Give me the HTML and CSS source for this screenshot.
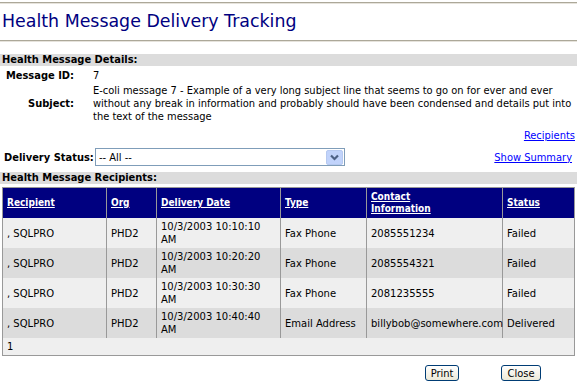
FILE: index.html
```html
<!DOCTYPE html>
<html lang="en">
<head>
    <meta charset="UTF-8">
    <title>Health Message Delivery Tracking</title>
    <link rel="stylesheet" href="styles.css">
</head>
<body>
    <div class="rule"></div>
    <h1 class="page-title">Health Message Delivery Tracking</h1>
    <div class="rule"></div>

    <div class="band">Health Message Details:</div>
    <table class="details">
        <tr>
            <td class="label">Message ID:</td>
            <td class="value">7</td>
        </tr>
        <tr>
            <td class="label">Subject:</td>
            <td class="value">E-coli message 7 - Example of a very long subject line that seems to go on for ever and ever without any break in information and probably should have been condensed and details put into the text of the message</td>
        </tr>
    </table>

    <div class="link-row"><a href="#">Recipients</a></div>

    <div class="filter-row">
        <label class="filter-label" for="status">Delivery Status:</label>
        <div class="select" id="status">
            <span class="select-text">-- All --</span>
            <span class="select-btn">
                <svg width="9" height="7" viewBox="0 0 9 7"><path d="M1 1.5 L4.5 5 L8 1.5" fill="none" stroke="#4d6185" stroke-width="2.2"/></svg>
            </span>
        </div>
        <a class="summary-link" href="#">Show Summary</a>
    </div>

    <div class="band band-recipients">Health Message Recipients:</div>
    <table class="grid">
        <colgroup>
            <col style="width:104px">
            <col style="width:50px">
            <col style="width:124px">
            <col style="width:86px">
            <col style="width:136px">
            <col>
        </colgroup>
        <thead>
            <tr>
                <th><a href="#">Recipient</a></th>
                <th><a href="#">Org</a></th>
                <th><a href="#">Delivery Date</a></th>
                <th><a href="#">Type</a></th>
                <th><a href="#">Contact<br>Information</a></th>
                <th><a href="#">Status</a></th>
            </tr>
        </thead>
        <tbody>
            <tr class="odd">
                <td>, SQLPRO</td><td>PHD2</td><td>10/3/2003 10:10:10 AM</td><td>Fax Phone</td><td>2085551234</td><td>Failed</td>
            </tr>
            <tr class="even">
                <td>, SQLPRO</td><td>PHD2</td><td>10/3/2003 10:20:20 AM</td><td>Fax Phone</td><td>2085554321</td><td>Failed</td>
            </tr>
            <tr class="odd">
                <td>, SQLPRO</td><td>PHD2</td><td>10/3/2003 10:30:30 AM</td><td>Fax Phone</td><td>2081235555</td><td>Failed</td>
            </tr>
            <tr class="even">
                <td>, SQLPRO</td><td>PHD2</td><td>10/3/2003 10:40:40 AM</td><td>Email Address</td><td>billybob@somewhere.com</td><td>Delivered</td>
            </tr>
            <tr class="pager">
                <td colspan="6">1</td>
            </tr>
        </tbody>
    </table>

    <div class="actions">
        <button class="btn btn-print">Print</button>
        <button class="btn btn-close">Close</button>
    </div>
</body>
</html>
```

FILE: styles.css
```css
body {
    margin: 0;
    padding-top: 2px;
    font-family: "DejaVu Sans Condensed", "DejaVu Sans", sans-serif;
    font-size: 11px;
    color: #000;
    background: #fff;
}
.rule {
    height: 1px;
    background: #aca899;
    border-bottom: 1px solid #e6e3dc;
}
.page-title {
    margin: 0;
    height: 36px;
    line-height: 34px;
    padding-left: 2px;
    font-family: "DejaVu Sans", sans-serif;
    font-size: 17.4px;
    font-weight: normal;
    color: #000080;
}
.band {
    margin-top: 12px;
    height: 12px;
    line-height: 12px;
    padding-left: 2px;
    background: #dcdcdc;
    font-weight: bold;
}
.details {
    border-collapse: collapse;
    margin-top: 2px;
}
.details td {
    padding: 0;
    line-height: 13px;
}
.details .label {
    width: 74px;
    text-align: right;
    font-weight: bold;
    padding: 1px 0;
}
.details .value {
    padding: 1px 0 1px 19px;
    width: 482px;
}
.link-row {
    margin-top: 5px;
    text-align: right;
    padding-right: 2px;
    line-height: 14px;
}
a {
    color: #0000ff;
}
.filter-row {
    display: flex;
    align-items: center;
    height: 18px;
    margin-top: 5px;
}
.filter-label {
    font-weight: bold;
    width: 91px;
    padding-left: 4px;
}
.select {
    display: flex;
    align-items: center;
    justify-content: space-between;
    width: 248px;
    height: 16px;
    border: 1px solid #7f9db9;
    background: #fff;
}
.select-text {
    padding-left: 3px;
}
.select-btn {
    display: flex;
    align-items: center;
    justify-content: center;
    width: 17px;
    height: 15px;
    margin-right: 1px;
    background: #c1d3fb;
    border: 1px solid #b6c9f0;
    box-sizing: border-box;
    border-radius: 2px;
}
.summary-link {
    margin-left: auto;
    margin-right: 5px;
}
.band-recipients {
    margin-top: 6px;
}
.grid {
    border-collapse: collapse;
    margin: 3px 0 0 2px;
    width: 573px;
    border: 1px solid #999;
    table-layout: fixed;
}
.grid th {
    background: #000080;
    height: 30px;
    padding: 0 4px;
    text-align: left;
    vertical-align: middle;
    border-left: 1px solid #999;
    line-height: 12px;
}
.grid th a {
    color: #fff;
    font-size: 10px;
    font-weight: bold;
}
.grid td {
    height: 30px;
    padding: 0 2px 0 4px;
    border-left: 1px solid #999;
    line-height: 13px;
    vertical-align: middle;
    font-family: "DejaVu Sans", sans-serif;
    font-size: 10px;
}
.grid tr.odd td {
    background: #efefef;
}
.grid tr.even td {
    background: #dcdcdc;
}
.grid tr.pager td {
    height: 17px;
    background: #efefef;
    padding-left: 4px;
}
.actions {
    display: flex;
    margin-top: 9px;
    padding-left: 425px;
}
.btn {
    font-family: "DejaVu Sans Condensed", "DejaVu Sans", sans-serif;
    font-size: 11px;
    height: 16px;
    padding: 0 4px;
    border: 1px solid #003c74;
    border-radius: 3px;
    background: linear-gradient(#ffffff, #ece9d8);
    color: #000;
}
.btn-print {
    width: 34px;
}
.btn-close {
    width: 40px;
    margin-left: 42px;
}
```
